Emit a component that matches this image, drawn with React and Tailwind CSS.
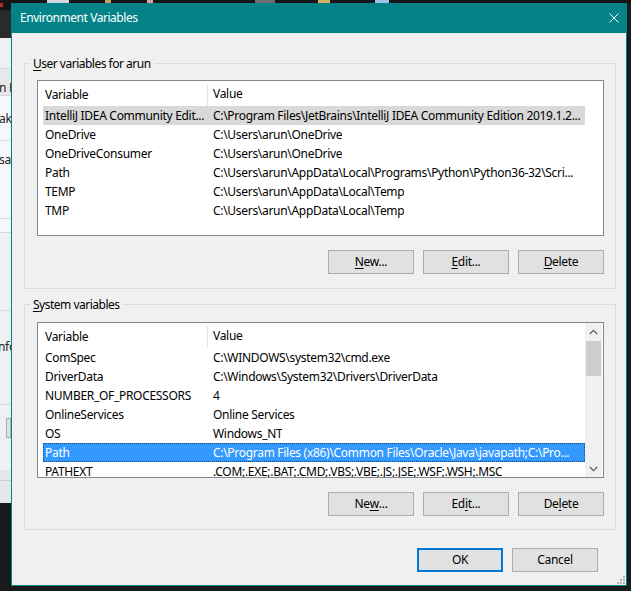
import React from "react";

const userRows = [
  ["IntelliJ IDEA Community Edit...", "C:\\Program Files\\JetBrains\\IntelliJ IDEA Community Edition 2019.1.2...", "gray"],
  ["OneDrive", "C:\\Users\\arun\\OneDrive"],
  ["OneDriveConsumer", "C:\\Users\\arun\\OneDrive"],
  ["Path", "C:\\Users\\arun\\AppData\\Local\\Programs\\Python\\Python36-32\\Scri..."],
  ["TEMP", "C:\\Users\\arun\\AppData\\Local\\Temp"],
  ["TMP", "C:\\Users\\arun\\AppData\\Local\\Temp"],
];

const sysRows = [
  ["ComSpec", "C:\\WINDOWS\\system32\\cmd.exe"],
  ["DriverData", "C:\\Windows\\System32\\Drivers\\DriverData"],
  ["NUMBER_OF_PROCESSORS", "4"],
  ["OnlineServices", "Online Services"],
  ["OS", "Windows_NT"],
  ["Path", "C:\\Program Files (x86)\\Common Files\\Oracle\\Java\\javapath;C:\\Pro...", "blue"],
  ["PATHEXT", ".COM;.EXE;.BAT;.CMD;.VBS;.VBE;.JS;.JSE;.WSF;.WSH;.MSC"],
];

function Row({ name, value, sel }) {
  let cls = "h-[19px] w-[542px] flex items-center shrink-0 whitespace-nowrap";
  if (sel === "gray") cls += " bg-[#d9d9d9]";
  if (sel === "blue") cls += " bg-[#3399ff] text-white outline outline-1 outline-dotted outline-[#10457a] -outline-offset-1";
  return (
    <div className={cls}>
      <div className="w-[165px] pl-[2px] overflow-hidden shrink-0">{name}</div>
      <div className="pl-[5px] overflow-hidden">{value}</div>
    </div>
  );
}

function Chevron({ up }) {
  return (
    <svg width="9" height="6" viewBox="0 0 9 6" className="block">
      {up ? (
        <polyline points="0.8,5 4.5,1.3 8.2,5" fill="none" stroke="#606060" strokeWidth="1.3" />
      ) : (
        <polyline points="0.8,1 4.5,4.7 8.2,1" fill="none" stroke="#606060" strokeWidth="1.3" />
      )}
    </svg>
  );
}

function List({ rows, scroll }) {
  return (
    <div className="w-[567px] h-[156px] border border-[#828790] bg-white flex overflow-hidden">
      <div className="flex-1 flex flex-col pl-[5px] overflow-hidden">
        <div className="h-[25px] w-[542px] flex items-center shrink-0">
          <div className="w-[165px] pl-[2px] h-[22px] mt-[2px] flex items-center border-r border-[#e5e5e5] shrink-0">Variable</div>
          <div className="pl-[5px]">Value</div>
        </div>
        {rows.map((r, i) => (
          <Row key={i} name={r[0]} value={r[1]} sel={r[2]} />
        ))}
      </div>
      {scroll && (
        <div className="w-[17px] mr-[1px] bg-[#f0f0f0] flex flex-col shrink-0">
          <div className="h-[17px] flex items-center justify-center shrink-0">
            <Chevron up />
          </div>
          <div className="flex-1 px-[1px] pt-[1px]">
            <div className="h-[35px] bg-[#cdcdcd]" />
          </div>
          <div className="h-[17px] flex items-center justify-center shrink-0">
            <Chevron />
          </div>
        </div>
      )}
    </div>
  );
}

function Btn({ children, primary }) {
  return (
    <div
      className={
        primary
          ? "w-[86px] h-[24px] flex items-center justify-center bg-[#e1e1e1] border-2 border-[#0078d7]"
          : "w-[86px] h-[24px] flex items-center justify-center bg-[#e1e1e1] border border-[#adadad]"
      }
    >
      {children}
    </div>
  );
}

function U({ children }) {
  return <span className="underline underline-offset-[2px] decoration-1">{children}</span>;
}

function Group({ label, rows, scroll, mt, listMt, buttons }) {
  return (
    <div className={`w-[592px] h-[226px] border border-[#dcdcdc] relative ml-[12px] ${mt}`}>
      <div className="absolute left-[5px] top-[-8px] px-[3px] bg-[#f0f0f0] leading-[16px] whitespace-nowrap tracking-[-0.5px]">
        {label}
      </div>
      <div className={`ml-[12px] ${listMt}`}>
        <List rows={rows} scroll={scroll} />
      </div>
      <div className="ml-[12px] mt-[14px] w-[567px] flex justify-end gap-[9px]">{buttons}</div>
    </div>
  );
}

export default function App() {
  return (
    <div className="w-[631px] h-[591px] bg-[#1a1a1a] relative overflow-hidden font-['Noto_Sans',sans-serif] text-[12px] text-black tracking-[-0.3px]">
      {/* desktop behind: top strip bits */}
      <div className="absolute top-0 left-0 w-[631px] h-[3px] bg-[#151515]">
        <div className="absolute left-0 top-0 w-[4px] h-[3px] bg-[#c0262b]" />
        <div className="absolute left-[47px] top-0 w-[22px] h-[3px] bg-[#cfd8e0]" />
        <div className="absolute left-[105px] top-0 w-[6px] h-[3px] bg-[#c8a060]" />
        <div className="absolute left-[147px] top-0 w-[6px] h-[3px] bg-[#d8a0a8]" />
        <div className="absolute left-[255px] top-0 w-[20px] h-[3px] bg-[#6f6f6f]" />
        <div className="absolute left-[318px] top-0 w-[12px] h-[3px] bg-[#d4b060]" />
        <div className="absolute left-[375px] top-0 w-[14px] h-[3px] bg-[#9cc4e8]" />
      </div>
      {/* window behind, left strip */}
      <div className="absolute top-0 left-0 w-[11px] h-[591px] flex flex-col overflow-hidden whitespace-nowrap text-[#222]">
        <div className="h-[10px] bg-[#141414] shrink-0 relative">
          <div className="absolute left-0 top-[3px] w-[3px] h-[4px] bg-[#b8282c]" />
        </div>
        <div className="h-[28px] bg-[#2a2a2a] shrink-0" />
        <div className="h-[30px] bg-[#f0f0f0] shrink-0" />
        <div className="h-[1px] bg-[#d9d9d9] shrink-0" />
        <div className="h-[26px] bg-[#e8e8e8] shrink-0 flex items-center pt-[12px]">
          <span className="-ml-[1px]">n F</span>
        </div>
        <div className="h-[1px] bg-[#d9d9d9] shrink-0" />
        <div className="h-[44px] bg-[#f7f7f7] shrink-0 flex items-center pt-[2px]">
          <span className="-ml-[1px]">ak</span>
        </div>
        <div className="h-[1px] bg-[#d9d9d9] shrink-0" />
        <div className="h-[77px] bg-[#f7f7f7] shrink-0 pt-[11px] leading-[16px]">
          <span className="-ml-[1px]">sa</span>
        </div>
        <div className="h-[1px] bg-[#d9d9d9] shrink-0" />
        <div className="h-[13px] bg-[#f7f7f7] shrink-0" />
        <div className="h-[1px] bg-[#d9d9d9] shrink-0" />
        <div className="h-[77px] bg-[#f0f0f0] shrink-0" />
        <div className="h-[1px] bg-[#d9d9d9] shrink-0" />
        <div className="h-[93px] bg-[#f0f0f0] shrink-0 pt-[28px] leading-[16px]">
          <span className="-ml-[2px]">nfo</span>
        </div>
        <div className="h-[1px] bg-[#d9d9d9] shrink-0" />
        <div className="h-[13px] bg-[#f0f0f0] shrink-0" />
        <div className="h-[20px] bg-[#f0f0f0] shrink-0 pl-[6px]">
          <div className="h-[20px] bg-[#e1e1e1] border border-[#adadad]" />
        </div>
        <div className="h-[32px] bg-[#f0f0f0] shrink-0" />
        <div className="h-[10px] bg-[#e6e6e6] shrink-0" />
        <div className="h-[1px] bg-[#cfcfcf] shrink-0" />
        <div className="h-[22px] bg-[#e6e6e6] shrink-0" />
      </div>

      {/* dialog */}
      <div className="absolute left-[11px] top-[3px] w-[616px] h-[583px] border border-[#038387] flex flex-col bg-[#f0f0f0]">
        <div className="h-[29px] bg-[#038387] flex items-center justify-between pl-[8px] pr-[7px] text-white shrink-0">
          <span className="mt-[-1px] tracking-[-0.45px]">Environment Variables</span>
          <svg width="10" height="10" viewBox="0 0 10 10" className="block mt-[-1px]">
            <path d="M0.5 0.5 L9.5 9.5 M9.5 0.5 L0.5 9.5" stroke="#ffffff" strokeWidth="1" />
          </svg>
        </div>
        <div className="flex-1 relative flex flex-col">
          <Group
            label={<><U>U</U>ser variables for arun</>}
            rows={userRows}
            mt="mt-[30px]"
            listMt="mt-[16px]"
            buttons={
              <>
                <Btn><U>N</U>ew...</Btn>
                <Btn><U>E</U>dit...</Btn>
                <Btn><U>D</U>elete</Btn>
              </>
            }
          />
          <Group
            label={<><U>S</U>ystem variables</>}
            rows={sysRows}
            scroll
            mt="mt-[15px]"
            listMt="mt-[17px]"
            buttons={
              <>
                <Btn>Ne<U>w</U>...</Btn>
                <Btn>Ed<U>i</U>t...</Btn>
                <Btn>De<U>l</U>ete</Btn>
              </>
            }
          />
          <div className="mt-[18px] flex justify-end gap-[9px] pr-[28px]">
            <Btn primary>OK</Btn>
            <Btn>Cancel</Btn>
          </div>
          <svg width="9" height="9" viewBox="0 0 9 9" className="absolute right-[1px] bottom-[1px]">
            <rect x="7" y="1" width="2" height="2" fill="#b4b4b4" />
            <rect x="4" y="4" width="2" height="2" fill="#b4b4b4" />
            <rect x="7" y="4" width="2" height="2" fill="#b4b4b4" />
            <rect x="1" y="7" width="2" height="2" fill="#b4b4b4" />
            <rect x="4" y="7" width="2" height="2" fill="#b4b4b4" />
            <rect x="7" y="7" width="2" height="2" fill="#b4b4b4" />
          </svg>
        </div>
      </div>
    </div>
  );
}
